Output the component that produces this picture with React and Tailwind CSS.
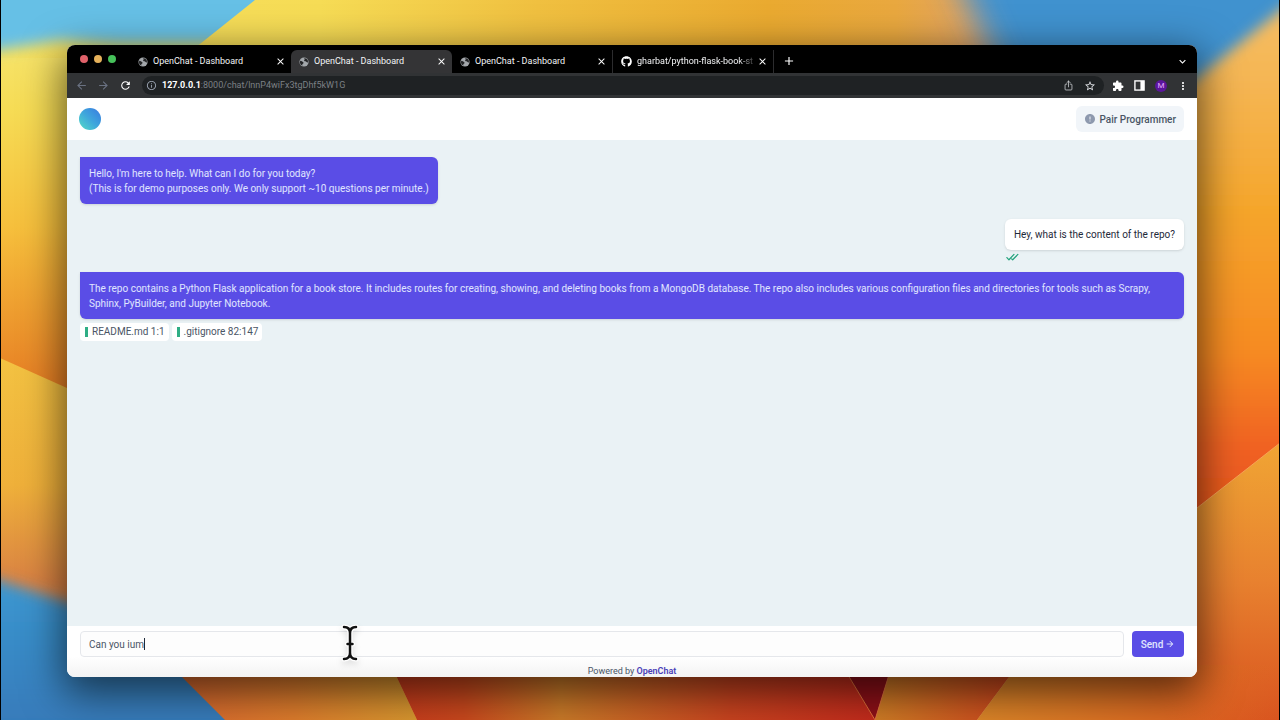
import React, { useState } from "react";
import clsx from "clsx";
import { FaGithub } from "react-icons/fa";
import { IoShareOutline } from "react-icons/io5";
import {
  MdAdd,
  MdArrowBack,
  MdArrowForward,
  MdClose,
  MdError,
  MdExpandMore,
  MdExtension,
  MdInfoOutline,
  MdMoreVert,
  MdRefresh,
  MdStarBorder,
} from "react-icons/md";

const tabs = [
  { id: 1, title: "OpenChat - Dashboard" },
  { id: 2, title: "OpenChat - Dashboard", active: true },
  { id: 3, title: "OpenChat - Dashboard", divider: true },
  { id: 4, title: "gharbat/python-flask-book-st", github: true, divider: true },
];

const messages = [
  {
    id: 1,
    from: "bot",
    lines: [
      "Hello, I'm here to help. What can I do for you today?",
      "(This is for demo purposes only. We only support ~10 questions per minute.)",
    ],
  },
  { id: 2, from: "user", lines: ["Hey, what is the content of the repo?"] },
  {
    id: 3,
    from: "bot",
    lines: [
      "The repo contains a Python Flask application for a book store. It includes routes for creating, showing, and deleting books from a MongoDB database. The repo also includes various configuration files and directories for tools such as Scrapy, Sphinx, PyBuilder, and Jupyter Notebook.",
    ],
    sources: ["README.md 1:1", ".gitignore 82:147"],
  },
];

const Wallpaper = () => (
  <svg
    className="absolute inset-0 h-full w-full"
    viewBox="0 0 1280 720"
    preserveAspectRatio="none"
    aria-hidden="true"
  >
    <defs>
      <filter id="soft" x="-20%" y="-20%" width="140%" height="140%">
        <feGaussianBlur stdDeviation="7" />
      </filter>
      <filter id="softer" x="-20%" y="-50%" width="140%" height="200%">
        <feGaussianBlur stdDeviation="16" />
      </filter>
      <clipPath id="topFold">
        <path d="M0 0H255L175 64L0 120Z" />
      </clipPath>
      <linearGradient id="top" x1="0" x2="1">
        <stop offset="0" stopColor="#f6e05f" />
        <stop offset="0.25" stopColor="#f6dc55" />
        <stop offset="0.42" stopColor="#f0c040" />
        <stop offset="0.6" stopColor="#eaaa30" />
        <stop offset="0.7" stopColor="#e9a83f" />
        <stop offset="0.77" stopColor="#dfa268" />
        <stop offset="1" stopColor="#dfa268" />
      </linearGradient>
      <linearGradient id="leftUpper" x1="0" y1="0" x2="0" y2="1">
        <stop offset="0" stopColor="#f6e266" />
        <stop offset="0.15" stopColor="#f6dc55" />
        <stop offset="0.5" stopColor="#f6bf3c" />
        <stop offset="1" stopColor="#e67a22" />
      </linearGradient>
      <linearGradient id="leftLower" x1="0" y1="0" x2="0" y2="1">
        <stop offset="0" stopColor="#f3c242" />
        <stop offset="0.35" stopColor="#efb03a" />
        <stop offset="0.62" stopColor="#d98243" />
        <stop offset="1" stopColor="#cf7840" />
      </linearGradient>
      <linearGradient id="blueLower" x1="0" y1="0" x2="0" y2="1">
        <stop offset="0" stopColor="#3b9ad3" />
        <stop offset="1" stopColor="#3573b4" />
      </linearGradient>
      <linearGradient id="rightUpper" x1="0" y1="0" x2="0" y2="1">
        <stop offset="0" stopColor="#f5c06a" />
        <stop offset="0.2" stopColor="#f5b552" />
        <stop offset="0.4" stopColor="#f5a62c" />
        <stop offset="0.65" stopColor="#f68a22" />
        <stop offset="0.82" stopColor="#f05f20" />
        <stop offset="1" stopColor="#e2521d" />
      </linearGradient>
      <linearGradient id="rightLower" x1="0" y1="0" x2="0" y2="1">
        <stop offset="0" stopColor="#f0a534" />
        <stop offset="0.5" stopColor="#e8812f" />
        <stop offset="1" stopColor="#d9541f" />
      </linearGradient>
      <linearGradient id="bottomA" x1="0" x2="1">
        <stop offset="0" stopColor="#d8672f" />
        <stop offset="0.5" stopColor="#dd7c2c" />
        <stop offset="1" stopColor="#d9982f" />
      </linearGradient>
      <linearGradient id="bottomB" x1="0" x2="1">
        <stop offset="0" stopColor="#c83a1c" />
        <stop offset="0.15" stopColor="#c9481d" />
        <stop offset="0.35" stopColor="#ca7a28" />
        <stop offset="0.7" stopColor="#c9431f" />
        <stop offset="1" stopColor="#c32a1c" />
      </linearGradient>
      <linearGradient id="bottomC" x1="0" x2="1">
        <stop offset="0" stopColor="#cf7d25" />
        <stop offset="1" stopColor="#cc431c" />
      </linearGradient>
      <linearGradient id="bottomD" x1="0" x2="1">
        <stop offset="0" stopColor="#dc8628" />
        <stop offset="0.6" stopColor="#dc6a22" />
        <stop offset="1" stopColor="#dc6a22" stopOpacity="0" />
      </linearGradient>
    </defs>

    <rect width="1280" height="720" fill="url(#top)" />
    <rect y="58" width="120" height="340" fill="url(#leftUpper)" />

    {/* blue corners above the window */}
    <g clipPath="url(#topFold)">
      <path d="M-40 -40H300V44H120L60 40L-40 56Z" fill="#66c0e6" filter="url(#soft)" />
    </g>
    <path d="M950 -40H1340V160H1040Z" fill="#3f92cf" filter="url(#softer)" />
    <path d="M1330 -30L1180 92V560H1330Z" fill="url(#rightUpper)" filter="url(#soft)" />

    {/* left folds */}
    <path d="M0 358L67 388L260 480V720H0Z" fill="url(#leftLower)" />
    <path d="M-40 568L67 602L260 640V760H-40Z" fill="url(#blueLower)" filter="url(#soft)" />

    {/* right folds */}
    <path d="M1280 443L1197 508L1090 590V720H1280Z" fill="url(#rightLower)" />
    <path d="M1280 443L1197 508" stroke="#f6a355" strokeWidth="1" />

    {/* strip under the window */}
    <path d="M170 665L225 720H417L391 665Z" fill="url(#bottomA)" />
    <path d="M391 665L417 720H877L842 665Z" fill="url(#bottomB)" />
    <path d="M842 665L875 720L892 665Z" fill="#8e1018" />
    <path d="M892 665L875 720H977L1018 665Z" fill="url(#bottomC)" />
    <path d="M1018 665L977 720H1280V665Z" fill="url(#bottomD)" />
    <path d="M842 665L875 720L892 665" fill="none" stroke="#e0703a" strokeWidth="1" />

    <path d="M0 0H1V720H0ZM1279 0H1280V720H1279Z" fill="#000" />
  </svg>
);

// default favicon of a site that has none
const GlobeIcon = ({ className }) => (
  <svg viewBox="0 0 12 12" className={className}>
    <circle cx="6" cy="6" r="5.500" fill="#a3a7ab" />
    <path
      d="M1.500 4.500L3.500 5L5.500 6.500L5 8L4 8.500L4 10.500L2 9L1 6.500ZM6 1.200L9 2L10.500 4L10.800 6.500L9.500 6.200L8 5L6.800 5L6 3.800L7 2.800Z"
      fill="#232426"
    />
  </svg>
);

const Tab = ({ tab }) => (
  <div
    className={clsx(
      "flex h-[23px] w-[161px] items-center pr-[5px] pl-2 text-[9px] text-gray-100",
      tab.active && "rounded-t-md bg-[#343436]",
      tab.divider && "border-r border-[#2c2c2e]"
    )}
  >
    {tab.github ? (
      <FaGithub className="size-[11px] shrink-0 text-white" />
    ) : (
      <GlobeIcon className="size-[10px] shrink-0" />
    )}
    <span
      className={clsx(
        "ml-[5px] flex-1 whitespace-nowrap",
        tab.github && "mask-r-from-85%"
      )}
    >
      {tab.title}
    </span>
    <button className="shrink-0 text-white" aria-label="Close tab">
      <MdClose className="size-[11px]" />
    </button>
  </div>
);

const BrowserChrome = () => (
  <>
    <div className="flex h-7 items-end bg-black">
      <div className="flex w-[63px] shrink-0 items-center gap-[6px] self-center pl-[13px]">
        <span className="size-2 rounded-full bg-[#e0626a]" />
        <span className="size-2 rounded-full bg-[#e5b15a]" />
        <span className="size-2 rounded-full bg-[#46c15a]" />
      </div>
      {tabs.map((tab) => (
        <Tab key={tab.id} tab={tab} />
      ))}
      <button className="ml-2 self-center pt-1 text-white" aria-label="New tab">
        <MdAdd className="size-[14px]" />
      </button>
      <button className="mr-2 ml-auto self-center pt-1 text-white" aria-label="Search tabs">
        <MdExpandMore className="size-[13px]" />
      </button>
    </div>

    <div className="flex h-[25px] items-center bg-[#313335] pr-2 pl-2 text-gray-200">
      <div className="flex w-[67px] shrink-0 items-center gap-[9px]">
        <MdArrowBack className="size-[13px] text-gray-500" />
        <MdArrowForward className="size-[13px] text-gray-500" />
        <MdRefresh className="size-[13px] text-white" />
      </div>
      <div className="flex h-[19px] flex-1 items-center rounded-full bg-[#1f2224] pr-2 pl-1">
        <MdInfoOutline className="size-[11px] text-gray-400" />
        <span className="ml-[5px] flex-1 text-[9px] text-[#7c8084]">
          <span className="font-bold text-white">127.0.0.1</span>
          :8000/chat/lnnP4wiFx3tgDhf5kW1G
        </span>
        <IoShareOutline className="size-[11px]" />
        <MdStarBorder className="ml-[10px] size-3" />
      </div>
      <div className="ml-2 flex items-center gap-[10px]">
        <MdExtension className="size-3 text-white" />
        <svg viewBox="0 0 12 12" className="size-[11px]" fill="none">
          <rect x="1" y="1" width="10" height="10" stroke="#fff" strokeWidth="1.5" />
          <rect x="7" y="1" width="4" height="10" fill="#fff" />
        </svg>
        <span className="flex size-3 items-center justify-center rounded-full bg-[#5b159c] text-[8px] text-[#e6a8ff]">
          M
        </span>
        <MdMoreVert className="size-3 text-white" />
      </div>
    </div>
  </>
);

const Message = ({ message }) => {
  if (message.from === "user") {
    return (
      <div className="self-end">
        <p className="rounded-md bg-white px-[9px] py-2 text-[10px] leading-[15px] text-gray-800 shadow-sm">
          {message.lines[0]}
        </p>
        <svg
          viewBox="0 0 14 8"
          className="mt-[3px] ml-[1px] h-2 w-[13px]"
          fill="none"
          stroke="#22a37c"
          strokeWidth="1.3"
          strokeLinecap="round"
          strokeLinejoin="round"
        >
          <path d="M1 4.6L3.2 7L8.6 1.2" />
          <path d="M6 6L7.2 7L12.8 1.2" />
        </svg>
      </div>
    );
  }

  return (
    <div className="self-start">
      <div className="rounded-md rounded-tl-none bg-[#5a4de6] px-[9px] pt-[9px] pb-2 text-[10px] leading-[15px] text-indigo-100 shadow-sm">
        {message.lines.map((line) => (
          <p key={line}>{line}</p>
        ))}
      </div>
      {message.sources && (
        <div className="mt-1 flex gap-[3px]">
          {message.sources.map((source) => (
            <span
              key={source}
              className="flex items-center rounded-sm bg-white px-1 pl-[5px] text-[10px] leading-[18px] text-gray-600"
            >
              <span className="mr-1 h-[10px] w-[3px] bg-[#2fae85]" />
              {source}
            </span>
          ))}
        </div>
      )}
    </div>
  );
};

const App = () => {
  const [question, setQuestion] = useState("Can you ium");

  return (
    <div className="relative flex h-screen flex-col overflow-hidden pt-[45px] pr-[83px] pb-[43px] pl-[67px] font-['Roboto',sans-serif]">
      <Wallpaper />

      <main className="relative flex flex-1 flex-col rounded-[8px] shadow-[0_12px_40px_4px_rgba(0,0,0,0.6)]">
        <div className="flex flex-1 flex-col overflow-hidden rounded-[8px] bg-white">
          <BrowserChrome />

          <header className="flex h-[42px] items-center justify-between px-3">
            <span className="size-[22px] rounded-full bg-linear-to-tr from-[#56dcc4] via-[#3fa6dc] to-[#3a78e0]" />
            <button className="mr-px flex h-[26px] items-center gap-1 rounded-md bg-[#f1f5f9] px-2 text-[10px] font-medium text-gray-600">
              <MdError className="size-3 text-[#8e99ae]" />
              Pair Programmer
            </button>
          </header>

          <section className="flex flex-1 flex-col bg-[#eaf2f5] px-[13px] pt-[17px]">
            <div className="flex flex-col gap-[15px]">
              {messages.slice(0, 1).map((message) => (
                <Message key={message.id} message={message} />
              ))}
              <div className="flex flex-col gap-[11px]">
                {messages.slice(1).map((message) => (
                  <Message key={message.id} message={message} />
                ))}
              </div>
            </div>
          </section>

          <footer className="bg-linear-to-b from-white from-60% to-[#f3f3f3] px-[13px] pt-[5px]">
            <form className="flex items-end gap-2" onSubmit={(e) => e.preventDefault()}>
              <div className="relative flex-1">
                <input
                  aria-label="Message"
                  className="block h-[26px] w-full rounded-sm border border-gray-200 bg-[#fdfdfd] px-2 text-[10px] text-gray-600 outline-none"
                  value={question}
                  onChange={(e) => setQuestion(e.target.value)}
                />
                <span className="absolute top-[7px] left-16 h-3 w-px bg-gray-800" />
                <svg
                  viewBox="0 0 20 38"
                  className="absolute -top-[7px] left-[260px] h-[38px] w-5 drop-shadow-md"
                  fill="none"
                  strokeLinecap="round"
                >
                  <g stroke="#fff" strokeWidth="5">
                    <path d="M4 3C8 3 10 5 10 9V29C10 33 8 35 4 35M16 3C12 3 10 5 10 9M10 29C10 33 12 35 16 35M7.500 20H12.500" />
                  </g>
                  <g stroke="#111" strokeWidth="2.500">
                    <path d="M4 3C8 3 10 5 10 9V29C10 33 8 35 4 35M16 3C12 3 10 5 10 9M10 29C10 33 12 35 16 35M7.500 20H12.500" />
                  </g>
                </svg>
              </div>
              <button
                type="submit"
                className="flex h-[26px] w-[52px] items-center justify-center gap-[2px] rounded-sm bg-[#5a4de6] text-[10px] font-medium text-indigo-100"
              >
                Send
                <MdArrowForward className="size-[10px]" />
              </button>
            </form>
            <p className="pt-2 text-center text-[9px] leading-3 text-gray-600">
              Powered by{" "}
              <a href="#" className="font-semibold text-[#4a3fb8]">
                OpenChat
              </a>
            </p>
          </footer>
        </div>
      </main>
    </div>
  );
};

export default App;
